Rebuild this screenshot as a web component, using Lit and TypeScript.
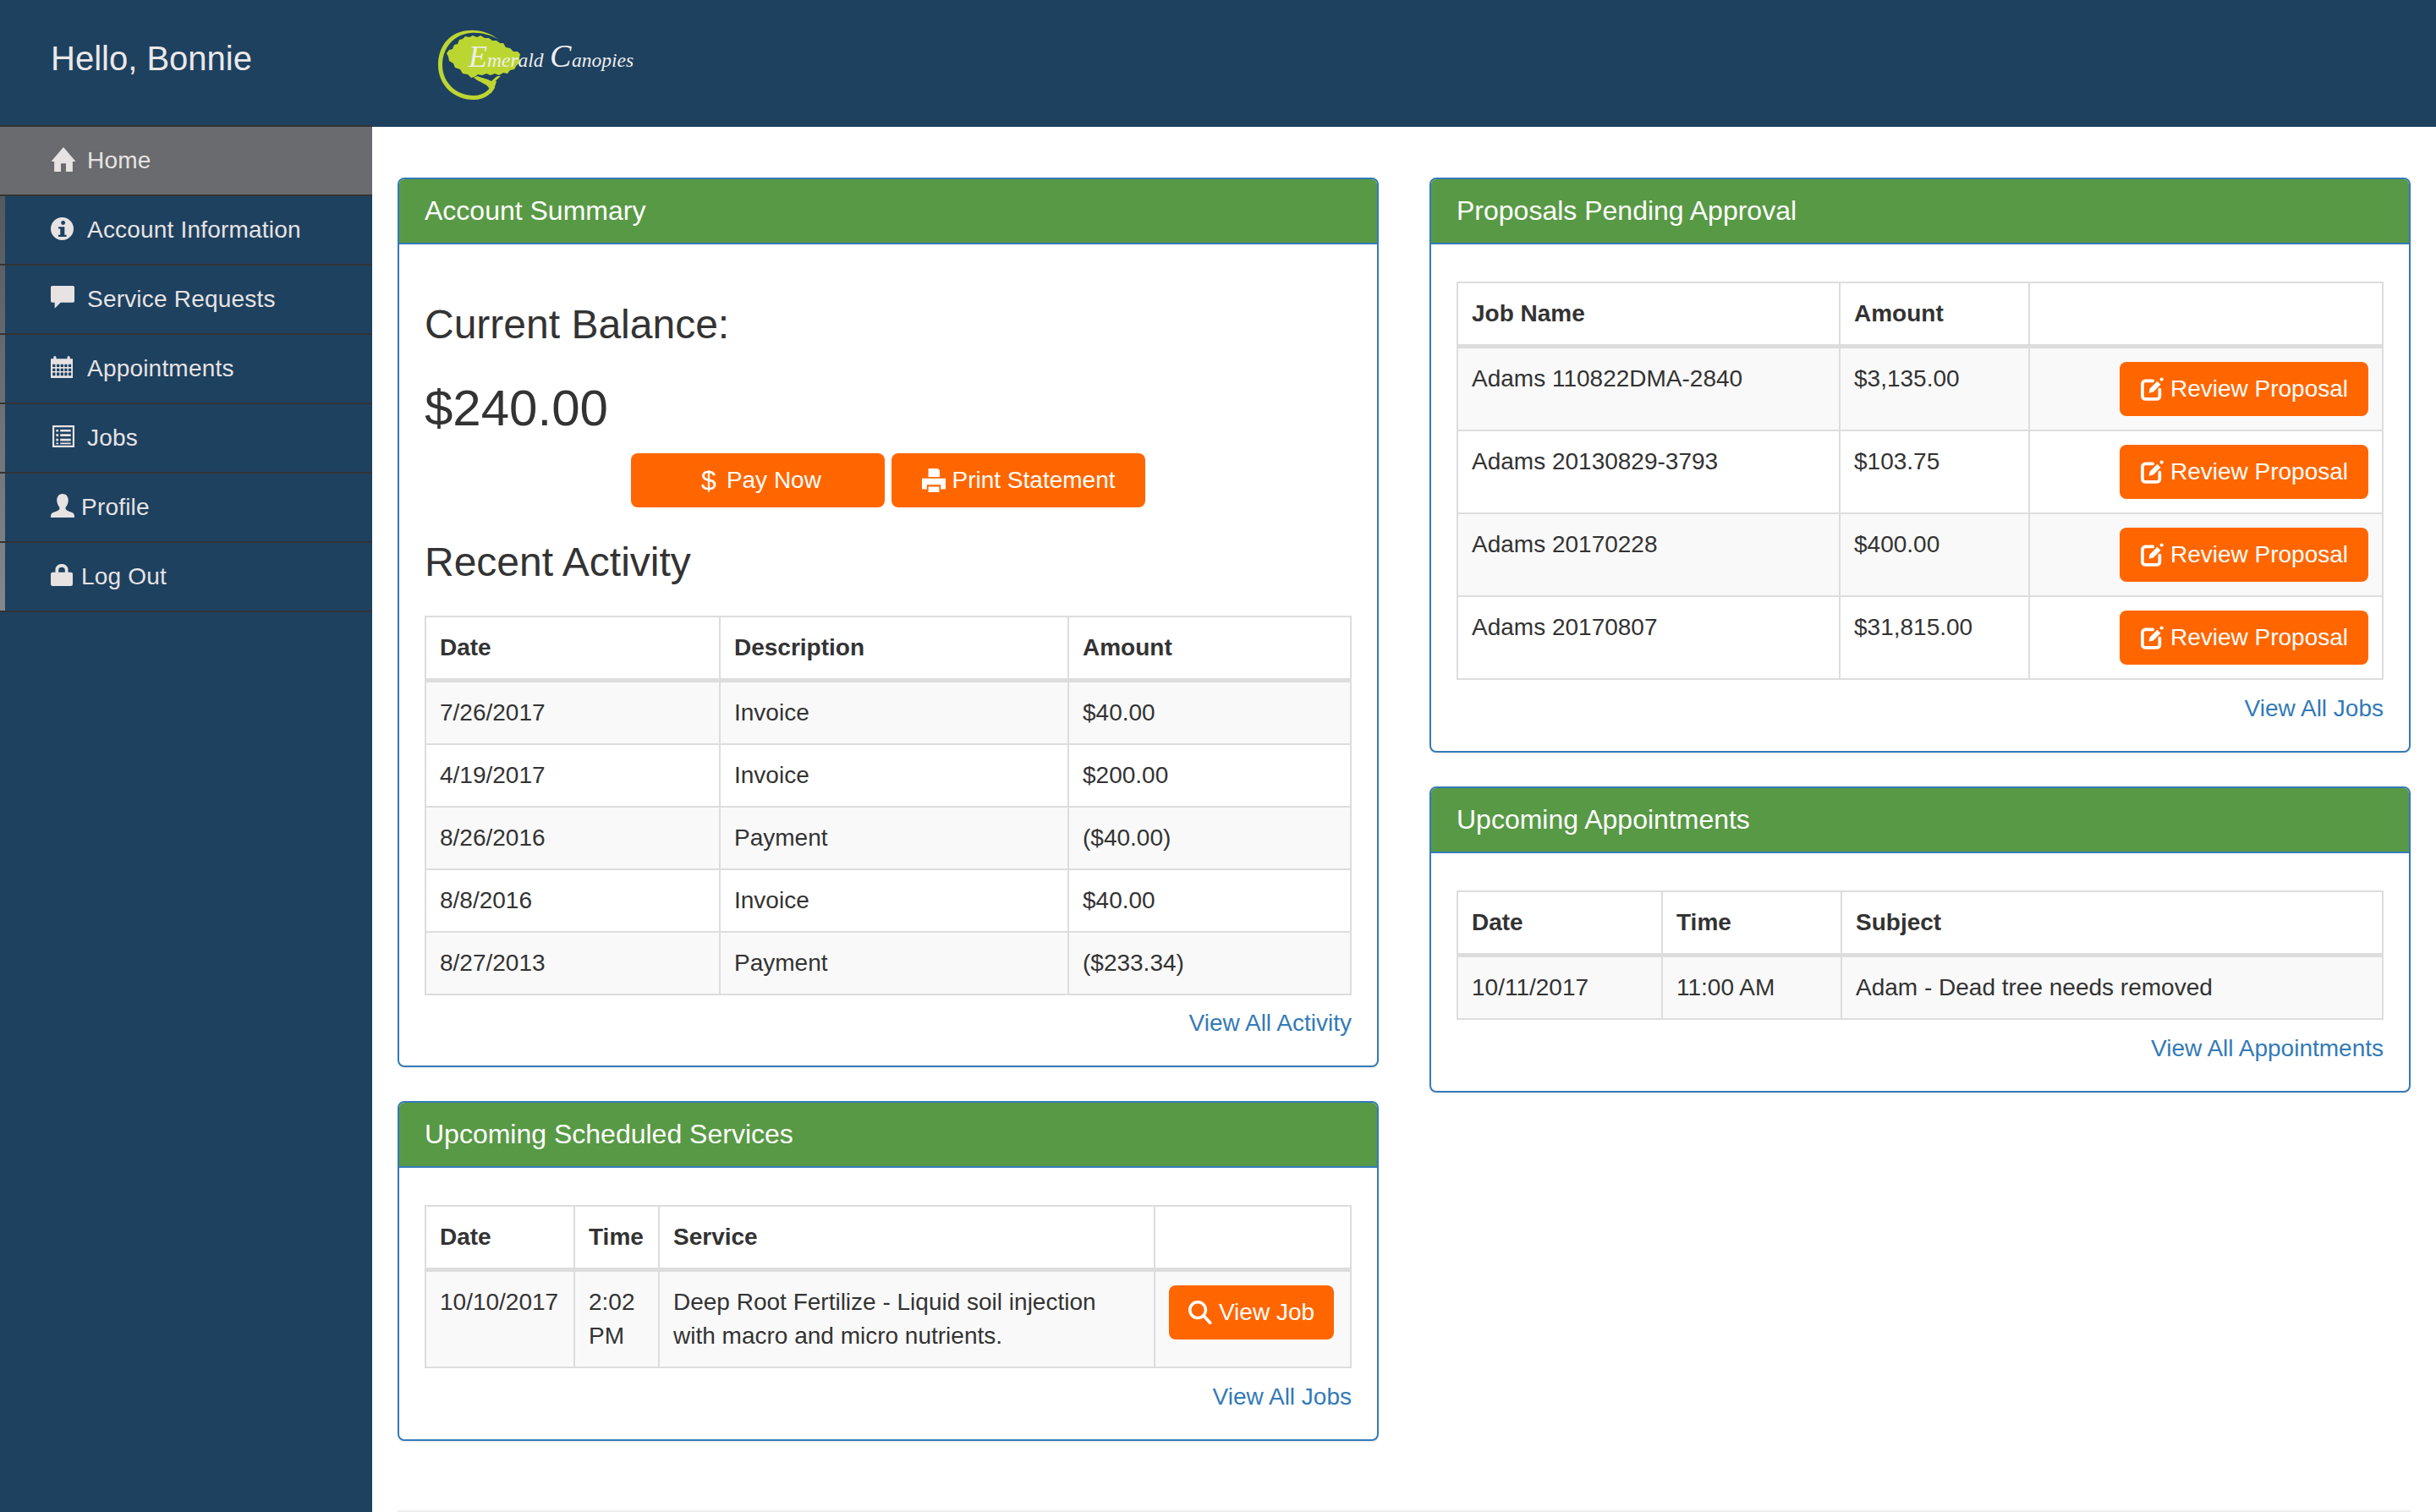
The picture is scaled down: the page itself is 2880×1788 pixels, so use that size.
import { LitElement, css, html, svg } from 'lit';
import { customElement } from 'lit/decorators.js';

// glyphicon style icons, drawn on a 24 box
const ICONS: Record<string, unknown> = {
  home: svg`<path d="M12 0L24 14h-3v10h-6.500v-8h-5v8H3V14H0z"/>`,
  info: svg`<path fill-rule="evenodd" d="M12 0a12 12 0 1 0 0 24a12 12 0 0 0 0-24zM13 3.500a2.200 2.200 0 1 1-.01 4.400a2.200 2.200 0 0 1 .01-4.400zM8 10h6.500v8.500H16.500v2H8v-2h2v-6.500H8z"/>`,
  comment: svg`<path d="M1.500 0h21A1.500 1.500 0 0 1 24 1.500v14a1.500 1.500 0 0 1-1.500 1.500H10l-6 6v-6H1.500A1.500 1.500 0 0 1 0 15.500v-14A1.500 1.500 0 0 1 1.500 0z"/>`,
  calendar: svg`<path fill-rule="evenodd" d="M0 3h3V1.500A1.500 1.500 0 0 1 6 1.500V3h12V1.500a1.500 1.500 0 0 1 3 0V3h3v21H0zM2 9v3h3V9zM6.500 9v3h3V9zM10.800 9v3h3V9zM15 9v3h3V9zM19.300 9v3h3V9zM2 13.500v3h3v-3zM6.500 13.500v3h3v-3zM10.800 13.500v3h3v-3zM15 13.500v3h3v-3zM19.300 13.500v3h3v-3zM2 18v3.500h3V18zM6.500 18v3.500h3V18zM10.800 18v3.500h3V18zM15 18v3.500h3V18zM19.300 18v3.500h3V18z"/>`,
  list: svg`<path fill-rule="evenodd" d="M0 0h24v24H0zM2 2v20h20V2zM4 4.500h2.500V7H4zM8.500 4.500H20V7H8.500zM4 9.500h2.500V12H4zM8.500 9.500H20V12H8.500zM4 14.500h2.500V17H4zM8.500 14.500H20V17H8.500zM4 19h2.500v1.500H4zM8.500 19H20v1.500H8.500z"/>`,
  user: svg`<path d="M12 0c3.800 0 5.800 3 5.800 6.500c0 3-1.300 5.500-2.600 7c-.3.900-.2 2 .5 2.800c1.500 1.300 5 2 7 3.200c.9.600 1.300 2 1.300 4.500H0c0-2.500.4-3.900 1.300-4.500c2-1.200 5.500-1.900 7-3.200c.7-.8.800-1.900.5-2.800c-1.300-1.500-2.600-4-2.600-7C6.200 3 8.200 0 12 0z"/>`,
  lock: svg`<path fill-rule="evenodd" d="M5 9V6.500C5 2.500 8 0 12 0s7 2.500 7 6.500V9h3a2 2 0 0 1 2 2v11a2 2 0 0 1-2 2H2a2 2 0 0 1-2-2V11a2 2 0 0 1 2-2zM8.500 9h7V6.500C15.500 4.500 14 3.500 12 3.500S8.500 4.500 8.500 6.500z"/>`,
  print: svg`<path d="M6.500 0H16l2 2v6.500H6.500zM0 10h24v11h-5v-4.500H5V21H0zM6.500 18.500h11V24h-11z"/>`,
  edit: svg`<path fill="none" stroke="currentColor" stroke-width="3.200" stroke-linecap="round" d="M13 3.800H5.500a3 3 0 0 0-3 3v12.400a3 3 0 0 0 3 3H17a3 3 0 0 0 3-3V12.500"/><path d="M9 16l1-4.500L17.500 4l3.500 3.500L13.500 15z"/><circle cx="22" cy="2.200" r="1.800"/>`,
  search: svg`<circle cx="9.500" cy="9.500" r="8" fill="none" stroke="currentColor" stroke-width="3"/><path fill="none" stroke="currentColor" stroke-width="3.200" stroke-linecap="round" d="M15.500 15.500L22 22.500"/>`,
};

const icon = (name: string) => html`<svg class="ico ${name}" viewBox="0 0 24 24" fill="currentColor">${ICONS[name]}</svg>`;

const NAV = [
  { label: 'Home', icon: 'home', active: true },
  { label: 'Account Information', icon: 'info' },
  { label: 'Service Requests', icon: 'comment' },
  { label: 'Appointments', icon: 'calendar' },
  { label: 'Jobs', icon: 'list' },
  { label: 'Profile', icon: 'user' },
  { label: 'Log Out', icon: 'lock' },
];

const ACTIVITY = [
  ['7/26/2017', 'Invoice', '$40.00'],
  ['4/19/2017', 'Invoice', '$200.00'],
  ['8/26/2016', 'Payment', '($40.00)'],
  ['8/8/2016', 'Invoice', '$40.00'],
  ['8/27/2013', 'Payment', '($233.34)'],
];

const PROPOSALS = [
  ['Adams 110822DMA-2840', '$3,135.00'],
  ['Adams 20130829-3793', '$103.75'],
  ['Adams 20170228', '$400.00'],
  ['Adams 20170807', '$31,815.00'],
];

@customElement('app-root')
export class AppRoot extends LitElement {
  static override styles = css`
    :host {
      display: block;
      height: 1788px;
      overflow: hidden;
      background: #fff;
      color: #333;
      font-family: 'Liberation Sans', Arial, sans-serif;
      font-size: 28px;
      line-height: 40px;
    }

    .topbar {
      display: flex;
      align-items: center;
      height: 150px;
      background: #1e4160;
    }
    .hello {
      width: 440px;
      box-sizing: border-box;
      padding: 0 0 12px 60px;
      font-size: 40px;
      line-height: 44px;
      color: #ebe8e8;
    }
    .logo {
      display: block;
      width: 270px;
      height: 110px;
      margin-left: 60px;
    }

    .layout {
      display: flex;
      height: 1638px;
    }
    .sidebar {
      flex: none;
      width: 440px;
      margin-top: -2px;
      background: #1e4160;
    }
    .sidebar ul {
      list-style: none;
      margin: 0;
      padding: 0;
      border-top: 2px solid #333;
      background: linear-gradient(#4d5158, #84878b) 0 0 / 6px 100% no-repeat;
    }
    .nav-item {
      display: flex;
      align-items: center;
      box-sizing: border-box;
      height: 82px;
      padding-left: 60px;
      border-bottom: 2px solid #333;
      color: #e7e3e3;
      font-size: 28px;
      letter-spacing: 0.2px;
    }
    .nav-item.active {
      background: #696b6e;
    }
    .nav-item .ico {
      flex: none;
      width: 28px;
      height: 28px;
      margin: -4px 15px 0 0;
    }
    .nav-item .home {
      width: 30px;
      height: 29px;
      margin-right: 13px;
    }
    .nav-item .info {
      width: 27px;
      height: 27px;
      margin-right: 16px;
    }
    .nav-item .calendar {
      width: 26px;
      margin-right: 17px;
    }
    .nav-item .list {
      width: 26px;
      margin: -4px 15px 0 2px;
    }
    .nav-item .user {
      margin-right: 8px;
    }
    .nav-item .lock {
      width: 26px;
      margin-right: 10px;
    }

    .content {
      flex: 1;
      display: grid;
      grid-template-columns: 1160px 1160px;
      column-gap: 60px;
      align-items: start;
      padding: 60px 30px 0;
    }
    .column {
      display: flex;
      flex-direction: column;
      gap: 40px;
    }
    .rule {
      grid-column: 1 / -1;
      height: 2px;
      margin-top: 82px;
      background: #eee;
    }

    .panel {
      box-sizing: border-box;
      border: 2px solid #337ab7;
      border-radius: 8px;
      box-shadow: 0 2px 2px rgba(0, 0, 0, 0.05);
      overflow: hidden;
    }
    .panel-heading {
      padding: 20px 30px;
      background: #589945;
      border-bottom: 2px solid #337ab7;
      color: #fff;
      font-size: 32px;
      line-height: 35px;
    }
    .panel-body {
      padding: 44px 30px 30px;
    }

    h3 {
      margin: 0;
      font-size: 48px;
      font-weight: 400;
      line-height: 53px;
    }
    .balance-label {
      margin-top: 24px;
    }
    .balance {
      margin: 40px 0 20px;
      font-size: 60px;
      font-weight: 400;
      line-height: 66px;
    }
    .actions {
      display: flex;
      justify-content: center;
      gap: 8px;
    }
    .recent {
      margin: 38px 0 37px;
    }

    .btn {
      display: inline-flex;
      align-items: center;
      justify-content: center;
      box-sizing: border-box;
      height: 64px;
      border-radius: 8px;
      background: #ff6600;
      color: #fff;
      font-size: 28px;
      white-space: nowrap;
    }
    .btn .ico {
      width: 28px;
      height: 28px;
      margin-right: 8px;
    }
    .btn-wide {
      width: 300px;
    }
    .btn-pay {
      padding-left: 8px;
    }
    .btn-review {
      width: 294px;
    }
    .btn-view {
      width: 195px;
    }
    .dollar {
      margin-right: 12px;
      font-size: 32px;
    }

    table {
      width: 100%;
      table-layout: fixed;
      border-collapse: collapse;
      border: 2px solid #ddd;
    }
    th,
    td {
      padding: 16px;
      border: 2px solid #ddd;
      text-align: left;
      vertical-align: top;
    }
    th {
      font-weight: 700;
      border-bottom-width: 5px;
    }
    tbody tr:nth-child(odd) {
      background: #f9f9f9;
    }
    td.right {
      text-align: right;
    }

    .more {
      display: block;
      margin-top: 14px;
      color: #337ab7;
      text-align: right;
    }
    .recent ~ .more {
      margin-top: 13px;
    }
  `;

  private nav() {
    return html`<aside class="sidebar">
      <ul>
        ${NAV.map(
          (n) => html`<li class="nav-item ${n.active ? 'active' : ''}">
            ${icon(n.icon)}<span>${n.label}</span>
          </li>`,
        )}
      </ul>
    </aside>`;
  }

  private panel(title: string, body: unknown) {
    return html`<section class="panel">
      <div class="panel-heading">${title}</div>
      <div class="panel-body">${body}</div>
    </section>`;
  }

  private accountSummary() {
    return this.panel(
      'Account Summary',
      html`<h3 class="balance-label">Current Balance:</h3>
        <h2 class="balance">$240.00</h2>
        <div class="actions">
          <a class="btn btn-wide btn-pay"><span class="dollar">$</span>Pay Now</a>
          <a class="btn btn-wide">${icon('print')}Print Statement</a>
        </div>
        <h3 class="recent">Recent Activity</h3>
        <table>
          <colgroup><col style="width:348px" /><col style="width:412px" /><col /></colgroup>
          <thead><tr><th>Date</th><th>Description</th><th>Amount</th></tr></thead>
          <tbody>
            ${ACTIVITY.map((r) => html`<tr>${r.map((c) => html`<td>${c}</td>`)}</tr>`)}
          </tbody>
        </table>
        <a class="more">View All Activity</a>`,
    );
  }

  private scheduled() {
    return this.panel(
      'Upcoming Scheduled Services',
      html`<table>
          <colgroup><col style="width:176px" /><col style="width:100px" /><col style="width:586px" /><col /></colgroup>
          <thead><tr><th>Date</th><th>Time</th><th>Service</th><th></th></tr></thead>
          <tbody>
            <tr>
              <td>10/10/2017</td>
              <td>2:02 PM</td>
              <td>Deep Root Fertilize - Liquid soil injection with macro and micro nutrients.</td>
              <td><a class="btn btn-view">${icon('search')}View Job</a></td>
            </tr>
          </tbody>
        </table>
        <a class="more">View All Jobs</a>`,
    );
  }

  private proposals() {
    return this.panel(
      'Proposals Pending Approval',
      html`<table>
          <colgroup><col style="width:452px" /><col style="width:224px" /><col /></colgroup>
          <thead><tr><th>Job Name</th><th>Amount</th><th></th></tr></thead>
          <tbody>
            ${PROPOSALS.map(
              (r) => html`<tr>
                <td>${r[0]}</td>
                <td>${r[1]}</td>
                <td class="right"><a class="btn btn-review">${icon('edit')}Review Proposal</a></td>
              </tr>`,
            )}
          </tbody>
        </table>
        <a class="more">View All Jobs</a>`,
    );
  }

  private appointments() {
    return this.panel(
      'Upcoming Appointments',
      html`<table>
          <colgroup><col style="width:242px" /><col style="width:212px" /><col /></colgroup>
          <thead><tr><th>Date</th><th>Time</th><th>Subject</th></tr></thead>
          <tbody>
            <tr><td>10/11/2017</td><td>11:00 AM</td><td>Adam - Dead tree needs removed</td></tr>
          </tbody>
        </table>
        <a class="more">View All Appointments</a>`,
    );
  }

  override render() {
    return html`
      <header class="topbar">
        <div class="hello">Hello, Bonnie</div>
        <svg class="logo" viewBox="0 0 270 110">
          <g fill="#bcd631">
            <path d="M90 27C78 18 66 15 55 16C32 17 18 34 18 57C18 80 36 98 60 98C74 98 84 90 87 76L83 76C80 86 72 93 60 93C40 93 23 78 23 57C23 37 36 21 56 19C68 18 80 21 90 27z"/>
            <path d="M28 43L31 39L35 38L37 33L41 32L43 27L47 26L50 23L55 24L59 22L64 24L68 22L73 25L78 25L82 28L87 28L91 31L95 31L98 36L103 37L107 41L112 41L115 44L114 49L115 54L111 57L108 62L103 63L100 67L95 66L90 69L85 67L80 69L75 67L70 69L65 68L61 71L57 72L53 68L47 67L44 62L38 60L36 55L31 52L30 47z"/>
            <path d="M60 72C68 78 75 79 78 84L80 91L85 84L84 78C86 75 89 73 92 70L88 70C85 72 83 74 81 76L77 74C72 73 68 71 64 70z"/>
          </g>
          <text y="59" fill="#eeeeee" font-family="'Liberation Serif', serif" font-style="italic" font-size="23.5"><tspan x="54" font-size="36">E</tspan><tspan x="76">merald</tspan> <tspan x="150" font-size="38">C</tspan><tspan x="176">anopies</tspan></text>
        </svg>
      </header>
      <div class="layout">
        ${this.nav()}
        <main class="content">
          <div class="column">${this.accountSummary()} ${this.scheduled()}</div>
          <div class="column">${this.proposals()} ${this.appointments()}</div>
          <div class="rule"></div>
        </main>
      </div>
    `;
  }
}

declare global {
  interface HTMLElementTagNameMap {
    'app-root': AppRoot;
  }
}
